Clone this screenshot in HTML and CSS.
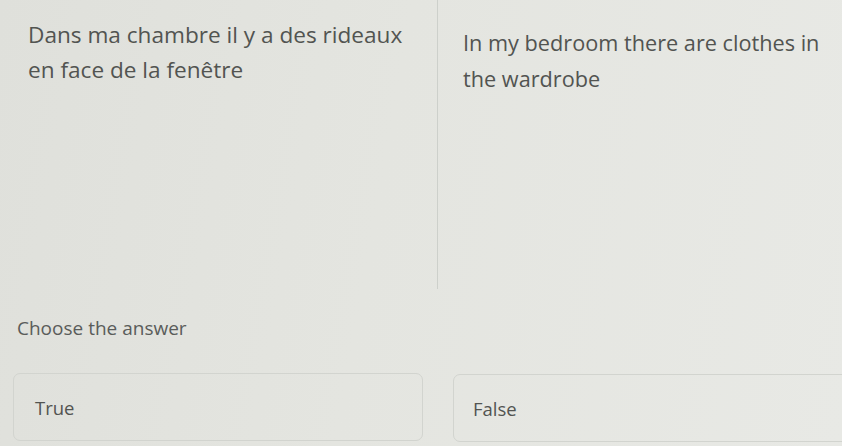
FILE: index.html
```html
<!DOCTYPE html>
<html>
<head>
<meta charset="utf-8">
<link rel="stylesheet" href="styles.css">
</head>
<body>
<div class="page">
  <div class="pair">
    <div class="col left">
      <p class="sentence">Dans ma chambre il y a des rideaux en face de la fenêtre</p>
    </div>
    <div class="col right">
      <p class="sentence">In my bedroom there are clothes in the wardrobe</p>
    </div>
  </div>
  <div class="prompt">Choose the answer</div>
  <div class="answers">
    <div class="answer first">True</div>
    <div class="answer second">False</div>
  </div>
</div>
</body>
</html>
```
FILE: styles.css
```css
html, body {
  margin: 0;
  padding: 0;
}
body {
  background: linear-gradient(100deg, #dfe0db 0%, #e4e5e0 45%, #e8e9e5 100%);
  font-family: "Open Sans", "Liberation Sans", sans-serif;
  color: #525451;
  width: 842px;
  height: 446px;
  overflow: hidden;
}
.page {
  display: flex;
  flex-direction: column;
}
.pair {
  display: grid;
  grid-template-columns: 438px 1fr;
  height: 289px;
}
.left {
  border-right: 1px solid #cdd0cb;
  padding: 17px 24px 0 28px;
}
.right {
  padding: 25px 0 0 25px;
}
.sentence {
  margin: 0;
  font-size: 22.6px;
  line-height: 35px;
}
.right .sentence {
  font-size: 21.7px;
  line-height: 36px;
}
.prompt {
  padding: 27px 0 0 17px;
  font-size: 19px;
  line-height: 24px;
  color: #5a5c5a;
}
.answers {
  display: grid;
  grid-template-columns: 410px 1fr;
  gap: 30px;
  margin-top: 33px;
  padding-left: 13px;
  margin-right: -10px;
}
.answer {
  height: 66px;
  border: 1.5px solid #d2d4cf;
  border-radius: 7px;
  display: flex;
  align-items: center;
  font-size: 18.5px;
  padding-left: 21px;
}
.answer.second {
  padding-left: 19px;
  margin-top: 1px;
}
```
